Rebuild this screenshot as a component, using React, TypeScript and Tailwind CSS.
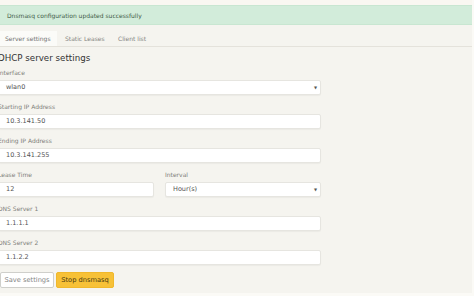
// DHCP server settings panel (dnsmasq), shown at a small scale.

const FONT = "font-['DejaVu_Sans',Verdana,sans-serif]";

function Field({ label, value, select = false }: { label: string; value: string; select?: boolean }) {
  return (
    <div className="mb-[7px]">
      <div className="text-[6px] leading-[9px] mb-[3px] text-[#7e7e7a]">{label}</div>
      <div className="relative h-[15px] bg-white border border-[#e6e5e0] rounded-[2px] flex items-center pl-[7px] text-[6.5px] text-[#555] shadow-[0_1px_1px_rgba(0,0,0,0.04)]">
        {value}
        {select && <span className="absolute right-[3px] top-[5px] text-[4px] leading-none text-[#555]">▼</span>}
      </div>
    </div>
  );
}

export default function App() {
  return (
    <div className={`${FONT} w-[474px] h-[296px] bg-[#fbfaf6] overflow-hidden`}>
      <div className="w-[472px] h-[293px] bg-[#f5f4ef] flex flex-col">
        <div className="h-[5px] bg-[#f9f7f1]" />
        <div className="h-[20px] bg-[#d2ecda] border-y border-[#c8e6d1] flex items-center px-[7px] text-[6px] text-[#3f5a47]">
          Dnsmasq configuration updated successfully
        </div>
        <div className="mt-[6px] flex h-[16px] border-b border-[#e4e2db] text-[6px] text-[#858581]">
          <div className="w-[57px] bg-[#fbfbf8] flex items-center pl-[5px] text-[#707070]">Server settings</div>
          <div className="flex items-center pl-[8px] w-[61px]">Static Leases</div>
          <div className="flex items-center">Client list</div>
        </div>

        <div className="ml-[-2px] w-[323px] mt-[5px]">
          <h2 className="text-[8.7px] leading-[13px] text-[#333] mb-[3px]">DHCP server settings</h2>
          <Field label="Interface" value="wlan0" select />
          <Field label="Starting IP Address" value="10.3.141.50" />
          <Field label="Ending IP Address" value="10.3.141.255" />
          <div className="grid grid-cols-2 gap-x-[11px]">
            <Field label="Lease Time" value="12" />
            <Field label="Interval" value="Hour(s)" select />
          </div>
          <Field label="DNS Server 1" value="1.1.1.1" />
          <Field label="DNS Server 2" value="1.1.2.2" />
          <div className="flex gap-[2px] ml-[2px] text-[6.7px]">
            <button className="h-[16px] w-[54px] bg-white border border-[#cfcfcb] rounded-[2px] text-[#858585]">Save settings</button>
            <button className="h-[16px] w-[58px] bg-[#f7c137] border border-[#f0b82c] rounded-[2px] text-[#4a3a10]">Stop dnsmasq</button>
          </div>
        </div>
      </div>
    </div>
  );
}
